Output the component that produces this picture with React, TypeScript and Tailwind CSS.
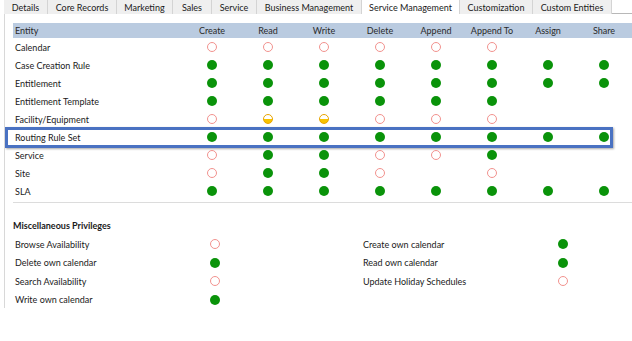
import React from "react";

type C = "G" | "O" | "H" | "-";

const Dot = ({ c }: { c: C }) => {
  if (c === "G") return <span className="block w-[10px] h-[10px] rounded-full bg-[#0a930a]" />;
  if (c === "O") return <span className="block w-[10px] h-[10px] rounded-full border-[1.5px] border-[#f2928e] bg-white" />;
  if (c === "H")
    return (
      <span className="block w-[10px] h-[10px] rounded-full border border-[#e8a400] bg-[linear-gradient(to_bottom,#ffffff_50%,#f7c300_50%)]" />
    );
  return <span className="block w-[10px] h-[10px]" />;
};

const tabs: [string, number, boolean][] = [
  ["Details", 44, false],
  ["Core Records", 69, false],
  ["Marketing", 56, false],
  ["Sales", 39, false],
  ["Service", 45, false],
  ["Business Management", 105, false],
  ["Service Management", 98, true],
  ["Customization", 73, false],
  ["Custom Entities", 79, false],
];

const cols = ["Create", "Read", "Write", "Delete", "Append", "Append To", "Assign", "Share"];

const rows: [string, C[], boolean?][] = [
  ["Calendar", ["O", "O", "O", "O", "O", "O", "-", "-"]],
  ["Case Creation Rule", ["G", "G", "G", "G", "G", "G", "G", "G"]],
  ["Entitlement", ["G", "G", "G", "G", "G", "G", "G", "G"]],
  ["Entitlement Template", ["G", "G", "G", "G", "G", "G", "-", "-"]],
  ["Facility/Equipment", ["O", "H", "H", "O", "O", "O", "-", "-"]],
  ["Routing Rule Set", ["G", "G", "G", "G", "G", "G", "G", "G"], true],
  ["Service", ["O", "G", "G", "O", "O", "G", "-", "-"]],
  ["Site", ["O", "G", "G", "O", "-", "O", "-", "-"]],
  ["SLA", ["G", "G", "G", "G", "G", "G", "G", "G"]],
];

const miscLeft: [string, C][] = [
  ["Browse Availability", "O"],
  ["Delete own calendar", "G"],
  ["Search Availability", "O"],
  ["Write own calendar", "G"],
];
const miscRight: [string, C][] = [
  ["Create own calendar", "G"],
  ["Read own calendar", "G"],
  ["Update Holiday Schedules", "O"],
];

const MiscCol = ({ items }: { items: [string, C][] }) => (
  <div className="w-[348px] shrink-0 flex flex-col">
    {items.map(([l, c]) => (
      <div key={l} className="h-[18.5px] flex items-center">
        <span className="w-[197px] shrink-0 pl-[2px]">{l}</span>
        <Dot c={c} />
      </div>
    ))}
  </div>
);

export default function App() {
  return (
    <div
      className="w-[632px] h-[341px] bg-white overflow-hidden text-[9px] leading-none text-[#1a1a1a]"
      style={{ fontFamily: "Lato, 'Liberation Sans', sans-serif" }}
    >
      <div className="flex h-[14px] pl-[4px]">
        {tabs.map(([t, w, a]) => (
          <div
            key={t}
            style={{ width: w }}
            className={`h-full flex items-center justify-center border-r border-[#d4d4d4] ${
              a ? "bg-white" : "bg-[#efefef]"
            }`}
          >
            {t}
          </div>
        ))}
        <div className="flex-1 border-b border-[#b8b8b8] bg-white" />
      </div>
      <div className="ml-[4px] border-l border-[#d8d8d8] h-[294px] pl-[8px] pt-[9px] overflow-hidden">
        <div className="flex items-center h-[15px] bg-[#bacbe0] text-[#2a2a2a]">
          <div className="w-[171px] pl-[2px]">Entity</div>
          {cols.map((c) => (
            <div key={c} className="w-[56px] text-center">
              {c}
            </div>
          ))}
        </div>
        {rows.map(([name, cells, hl]) => (
          <div key={name} className="relative flex items-center h-[18px]">
            {hl && (
              <div className="absolute -top-[1px] -left-[8px] w-[608px] h-[21px] border-[3px] border-[#4a72c2] shadow-[1px_1px_2px_rgba(0,0,0,0.35)]" />
            )}
            <div className="w-[171px] pl-[2px]">{name}</div>
            {cells.map((c, i) => (
              <div key={i} className="w-[56px] flex justify-center">
                <Dot c={c} />
              </div>
            ))}
          </div>
        ))}
        <div className="mt-[2px] border-t border-[#dcdcdc]" />
        <div className="mt-[18px] font-bold">Miscellaneous Privileges</div>
        <div className="flex mt-[5px]">
          <MiscCol items={miscLeft} />
          <MiscCol items={miscRight} />
        </div>
      </div>
    </div>
  );
}
